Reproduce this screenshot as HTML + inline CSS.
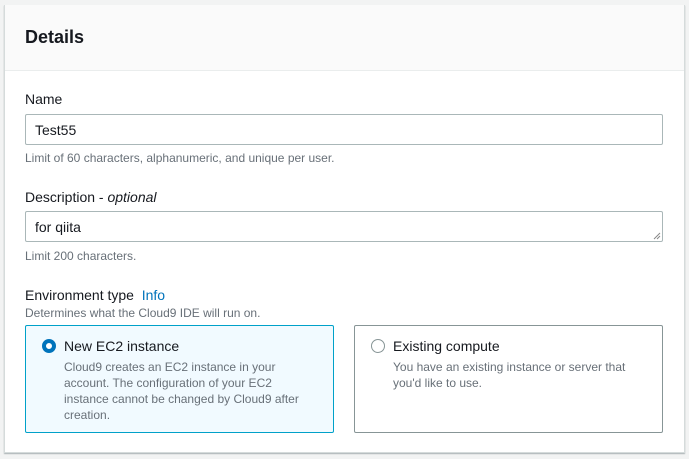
<!DOCTYPE html>
<html><head><style>
*{box-sizing:border-box;margin:0;padding:0}
body{width:689px;height:459px;background:#f2f3f3;font-family:"Liberation Sans",sans-serif;color:#16191f;position:relative;overflow:hidden}
.card{position:absolute;left:4px;top:5px;width:681px;height:448px;background:#fff;border:1px solid #d5dbdb;border-top:none;box-shadow:0 1px 1px rgba(0,28,36,.3)}
.hdr{position:absolute;left:0;top:0;right:0;height:66px;background:#fafafa;border-bottom:1px solid #eaeded}
.abs{position:absolute;white-space:nowrap}
.h{font-size:18px;font-weight:bold;left:20px;top:22px}
.lbl{font-size:14px;left:20px}
.help{font-size:12px;color:#687078;left:20px}
.inp{position:absolute;left:20px;width:638px;height:31px;border:1px solid #aab7b8;border-radius:2px;font-size:14px;padding:7px 9px}
.tile{position:absolute;top:320px;height:108px;border:1px solid #879596;border-radius:2px}
.t{font-size:14px;position:absolute;left:38px;top:12px}
.d{font-size:12px;color:#687078;position:absolute;left:38px;top:33px;line-height:16px;width:245px;white-space:normal}
</style></head><body>
<div class="card">
<div class="hdr"></div>
<div class="abs h">Details</div>
<div class="abs lbl" style="top:86px">Name</div>
<div class="inp" style="top:109px">Test55</div>
<div class="abs help" style="top:146px">Limit of 60 characters, alphanumeric, and unique per user.</div>
<div class="abs lbl" style="top:184px">Description - <i>optional</i></div>
<div class="inp" style="top:206px">for qiita
<svg style="position:absolute;right:1px;bottom:1px" width="8" height="8"><path d="M1 7L7 1M4 7L7 4" stroke="#888" stroke-width="1"/></svg></div>
<div class="abs help" style="top:244px">Limit 200 characters.</div>
<div class="abs lbl" style="top:282px">Environment type&nbsp;&nbsp;<span style="color:#0073bb">Info</span></div>
<div class="abs help" style="top:301px">Determines what the Cloud9 IDE will run on.</div>
<div class="tile" style="left:20px;width:309px;background:#f1faff;border-color:#00a1c9">
<div style="position:absolute;left:16px;top:13px;width:14px;height:14px;border-radius:50%;border:4px solid #0073bb;background:#fff"></div>
<div class="t">New EC2 instance</div>
<div class="d">Cloud9 creates an EC2 instance in your account. The configuration of your EC2 instance cannot be changed by Cloud9 after creation.</div>
</div>
<div class="tile" style="left:349px;width:309px">
<div style="position:absolute;left:16px;top:13px;width:14px;height:14px;border-radius:50%;border:1px solid #879596;background:#fff"></div>
<div class="t">Existing compute</div>
<div class="d">You have an existing instance or server that you'd like to use.</div>
</div>
</div>
</body></html>
